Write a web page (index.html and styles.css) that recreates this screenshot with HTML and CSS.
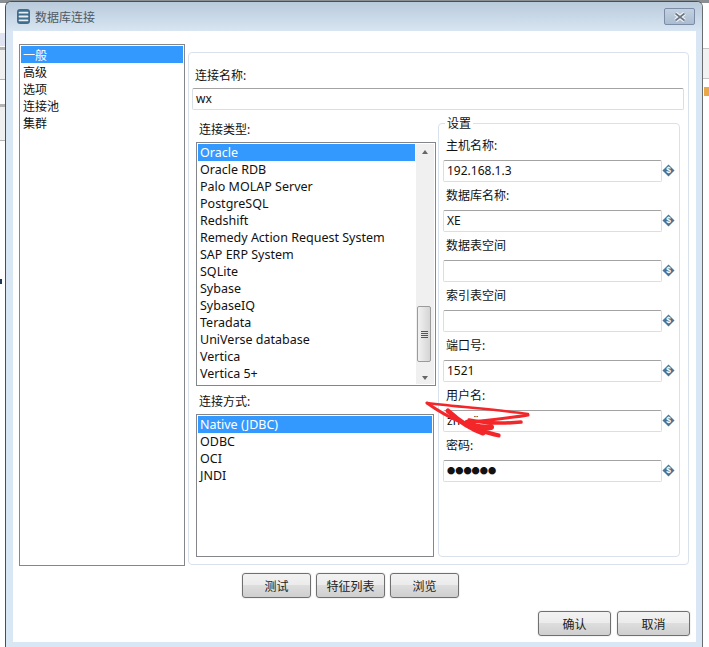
FILE: index.html
```html
<!DOCTYPE html>
<html lang="zh">
<head>
<meta charset="utf-8">
<title>数据库连接</title>
<link rel="stylesheet" href="styles.css">
</head>
<body>
<div class="bg-frag bg-a"></div>
<div class="bg-frag bg-b"></div>
<div class="bg-frag bg-c"></div>
<div class="bg-frag bg-f"></div>
<div class="bg-frag bg-d"></div>
<div class="bg-frag bg-e"></div>
<div class="bg-frag bg-g"></div>
<div class="window">
  <header class="titlebar">
    <svg class="db-icon" width="13" height="15" viewBox="0 0 13 15">
      <rect x="0" y="0" width="13" height="15" rx="3" fill="#3f6f8f"/>
      <path d="M2.5 3.7h8M2.5 7.5h8M2.5 11.3h8" stroke="#e8eef3" stroke-width="1.8" stroke-linecap="round"/>
    </svg>
    <span class="title-text">数据库连接</span>
    <button class="close-btn" aria-label="关闭">
      <svg width="12" height="10" viewBox="0 0 12 10"><path d="M1.5 1.5l9 7M10.5 1.5l-9 7" stroke="#f6f8fa" stroke-width="4"/><path d="M1.5 1.5l9 7M10.5 1.5l-9 7" stroke="#6b7583" stroke-width="1.6"/></svg>
    </button>
  </header>
  <main class="content">
    <div class="top-row">
      <ul class="list nav">
        <li class="item selected">一般</li>
        <li class="item">高级</li>
        <li class="item">选项</li>
        <li class="item">连接池</li>
        <li class="item">集群</li>
      </ul>
      <section class="panel">
        <div class="name-label">连接名称:</div>
        <div class="input name-input">wx</div>
        <div class="columns">
          <div class="left-col">
            <div class="col-label">连接类型:</div>
            <div class="list type-list">
              <ul class="type-items latin">
                <li class="item selected">Oracle</li>
                <li class="item">Oracle RDB</li>
                <li class="item">Palo MOLAP Server</li>
                <li class="item">PostgreSQL</li>
                <li class="item">Redshift</li>
                <li class="item">Remedy Action Request System</li>
                <li class="item">SAP ERP System</li>
                <li class="item">SQLite</li>
                <li class="item">Sybase</li>
                <li class="item">SybaseIQ</li>
                <li class="item">Teradata</li>
                <li class="item">UniVerse database</li>
                <li class="item">Vertica</li>
                <li class="item">Vertica 5+</li>
              </ul>
              <div class="scrollbar">
                <span class="arrow up"></span>
                <div class="thumb-track">
                  <div class="thumb"><span class="grip"></span></div>
                </div>
                <span class="arrow down"></span>
              </div>
            </div>
            <div class="col-label method-label">连接方式:</div>
            <ul class="list method-list latin">
              <li class="item selected">Native (JDBC)</li>
              <li class="item">ODBC</li>
              <li class="item">OCI</li>
              <li class="item">JNDI</li>
            </ul>
          </div>
          <div class="settings">
            <span class="legend">设置</span>
            <div class="field"><label class="field-label">主机名称:</label><div class="field-row"><div class="input field-input">192.168.1.3</div><svg class="var-icon" width="13" height="13" viewBox="0 0 14 14"><use href="#diamond"/></svg></div></div>
            <div class="field"><label class="field-label">数据库名称:</label><div class="field-row"><div class="input field-input">XE</div><svg class="var-icon" width="13" height="13" viewBox="0 0 14 14"><use href="#diamond"/></svg></div></div>
            <div class="field"><label class="field-label">数据表空间</label><div class="field-row"><div class="input field-input"></div><svg class="var-icon" width="13" height="13" viewBox="0 0 14 14"><use href="#diamond"/></svg></div></div>
            <div class="field"><label class="field-label">索引表空间</label><div class="field-row"><div class="input field-input"></div><svg class="var-icon" width="13" height="13" viewBox="0 0 14 14"><use href="#diamond"/></svg></div></div>
            <div class="field"><label class="field-label">端口号:</label><div class="field-row"><div class="input field-input">1521</div><svg class="var-icon" width="13" height="13" viewBox="0 0 14 14"><use href="#diamond"/></svg></div></div>
            <div class="field"><label class="field-label">用户名:</label><div class="field-row"><div class="input field-input">zh    ¨</div><svg class="var-icon" width="13" height="13" viewBox="0 0 14 14"><use href="#diamond"/></svg></div></div>
            <div class="field"><label class="field-label">密码:</label><div class="field-row"><div class="input field-input password">●●●●●●</div><svg class="var-icon" width="13" height="13" viewBox="0 0 14 14"><use href="#diamond"/></svg></div></div>
          </div>
        </div>
      </section>
    </div>
    <div class="tool-row">
      <button class="btn">测试</button>
      <button class="btn">特征列表</button>
      <button class="btn">浏览</button>
    </div>
    <div class="action-row">
      <button class="btn">确认</button>
      <button class="btn">取消</button>
    </div>
  </main>
</div>
<svg class="defs" width="0" height="0">
  <defs>
    <g id="diamond">
      <path d="M7 0.5L13.5 7L7 13.5L0.5 7Z" fill="#4a7394"/>
      <text x="7" y="10.2" text-anchor="middle" font-family="Liberation Sans, sans-serif" font-size="9" font-weight="700" fill="#fff">$</text>
    </g>
  </defs>
</svg>
<svg class="scribble" width="110" height="45" viewBox="0 0 110 45" fill="none" stroke="#f3262a" stroke-linecap="round" stroke-linejoin="round">
  <path d="M2 3C35 7 75 10 103 14" stroke-width="2.5"/>
  <path d="M103 15C85 18 65 20 46 22" stroke-width="3"/>
  <path d="M2 3C20 16 45 28 74 35" stroke-width="3"/>
  <path d="M23 11C33 20 45 29 58 33" stroke-width="5"/>
  <path d="M44 20C58 23 75 24 96 22" stroke-width="3.5"/>
  <path d="M42 23C52 28 60 28 66 27" stroke-width="6"/>
  <path d="M54 31C62 33 68 35 74 36" stroke-width="3"/>
</svg>
</body>
</html>
```
FILE: styles.css
```css
* { box-sizing: border-box; }
html, body { margin: 0; padding: 0; }
body {
  width: 709px;
  height: 647px;
  overflow: hidden;
  position: relative;
  background: #fff;
  font-family: "Noto Sans", "Noto Sans CJK SC", sans-serif;
  font-size: 12px;
  color: #111;
}
ul { list-style: none; margin: 0; padding: 0; }
.bg-frag { position: absolute; }
.bg-a { left: 0; top: 0; width: 709px; height: 3px; background: #8a8f94; }
.bg-b { left: 0; top: 33px; width: 5px; height: 13px; background: #dfe4f0; }
.bg-c { left: 0; top: 47px; width: 5px; height: 33px; background: #f0f0f0; border-top: 3px solid #b4b4b4; border-bottom: 1px solid #b4b4b4; }
.bg-f { left: 0; top: 104px; width: 5px; height: 37px; background: #f0f0f0; border-top: 3px solid #b4b4b4; border-bottom: 1px solid #b4b4b4; }
.bg-d { left: 703px; top: 48px; width: 6px; height: 31px; background: #f1f1f1; border-top: 1px solid #c5c5c5; border-bottom: 1px solid #c5c5c5; }
.bg-e { left: 704px; top: 87px; width: 5px; height: 9px; background: #e9a84a; }
.bg-g { left: 0; top: 279px; width: 2px; height: 5px; background: #1c3a57; }
.window {
  position: absolute;
  left: 5px;
  top: 1px;
  width: 698px;
  height: 646px;
  border-left: 1px solid #4c4f52;
  border-right: 1px solid #6a6d70;
  border-top: 1px solid #4c4f52;
  border-radius: 6px 6px 0 0;
  background: #d9e6f3;
  padding: 0 6px 5px 7px;
  display: flex;
  flex-direction: column;
}
.titlebar {
  height: 29px;
  margin: 0 -6px 0 -7px;
  padding: 0 7px 0 11px;
  flex: none;
  display: flex;
  align-items: center;
  background: linear-gradient(#b9cadb, #d8e5f2);
  border-radius: 5px 5px 0 0;
}
.db-icon { flex: none; }
.title-text { margin-left: 5px; font-size: 12px; color: #4f5a64; }
.close-btn {
  margin-left: auto;
  width: 31px;
  height: 17px;
  padding: 0;
  display: flex;
  align-items: center;
  justify-content: center;
  border: 1px solid #7c8ba6;
  border-radius: 2px;
  background: linear-gradient(#c3d2e1, #aabcd0);
}
.content {
  flex: 1;
  background: #fff;
  padding: 13px 6px 0;
  display: flex;
  flex-direction: column;
}
.top-row { display: flex; gap: 3px; height: 522px; flex: none; }
.list { border: 1px solid #84868c; background: #fff; padding: 1px; }
.item { height: 17px; line-height: 19px; padding-left: 2px; white-space: nowrap; overflow: hidden; }
.item.selected { background: #3399ff; color: #fff; }
.latin { font-size: 12.5px; }
.latin .item { line-height: 17px; }
.nav { width: 166px; height: 522px; }
.panel {
  width: 501px;
  height: 513px;
  margin-top: 8px;
  border: 1px solid #d9e2ec;
  border-radius: 4px;
  padding: 13px 4px 0 3px;
}
.name-label { height: 22px; line-height: 20px; padding-left: 3px; }
.input {
  height: 22px;
  line-height: 20px;
  padding-left: 3px;
  border: 1px solid #d9dfe6;
  border-top-color: #a3a3a3;
  border-radius: 2px;
  background: #fff;
  white-space: pre;
  overflow: hidden;
}
.name-input { width: 492px; }
.columns { display: flex; gap: 2px; margin-top: 13px; margin-left: 4px; height: 434px; }
.left-col { width: 240px; flex: none; }
.col-label { height: 19px; line-height: 14px; padding-left: 3px; padding-top: 0; }
.type-list { width: 240px; height: 244px; display: flex; }
.type-items { width: 217px; flex: none; }
.scrollbar {
  width: 18px;
  margin-left: 1px;
  background: #f0f0f0;
  display: flex;
  flex-direction: column;
  align-items: center;
}
.arrow { width: 0; height: 0; border-left: 3px solid transparent; border-right: 3px solid transparent; margin: 6px 0; flex: none; }
.arrow.up { border-bottom: 4px solid #666; }
.arrow.down { border-top: 4px solid #666; margin-bottom: 4px; }
.thumb-track { flex: 1; width: 100%; display: flex; flex-direction: column; justify-content: flex-end; padding-bottom: 8px; }
.thumb {
  width: 14px;
  height: 56px;
  margin-left: 1px;
  border: 1px solid #9b9b9b;
  border-radius: 2px;
  background: linear-gradient(90deg, #f1f1f1, #d5d5d5);
  display: flex;
  align-items: center;
  justify-content: center;
}
.grip { width: 7px; height: 7px; background: repeating-linear-gradient(#555 0 1px, transparent 1px 2px); }
.method-label { height: 28px; padding-top: 10px; line-height: 12px; }
.method-list { width: 238px; height: 143px; }
.settings {
  width: 242px;
  height: 434px;
  position: relative;
  border: 1px solid #d9e2ec;
  border-radius: 4px;
  padding: 8px 0 0 4px;
}
.legend {
  position: absolute;
  left: 6px;
  top: -7px;
  padding: 0 2px;
  background: #fff;
  line-height: 14px;
}
.field { height: 50px; }
.field-label { display: block; height: 28px; line-height: 28px; padding-left: 3px; }
.field-row { display: flex; align-items: center; }
.field-input { width: 219px; flex: none; }
.var-icon { flex: none; margin: -2px 0 0 0; }
.password { font-size: 8.2px; letter-spacing: 0; }
.tool-row { display: flex; gap: 5px; margin-top: 7px; padding-left: 223px; }
.action-row { display: flex; gap: 6px; margin-top: 13px; justify-content: flex-end; }
.btn {
  width: 69px;
  height: 25px;
  padding: 0;
  font: inherit;
  color: #222;
  border: 1px solid #707070;
  border-radius: 3px;
  background: linear-gradient(#f2f2f2 0, #ebebeb 50%, #dddddd 50%, #cfcfcf 100%);
  box-shadow: 0 0 0 1px #f4f4f4;
}
.action-row .btn { width: 73px; }
.defs { position: absolute; }
.scribble { position: absolute; left: 425px; top: 400px; }
```
